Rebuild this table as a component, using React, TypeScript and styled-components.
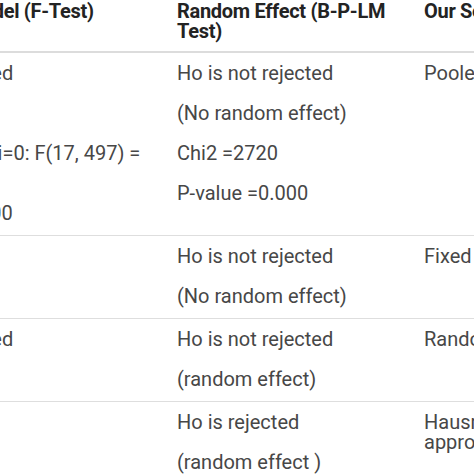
import React from "react";
import styled, { createGlobalStyle } from "styled-components";

const Global = createGlobalStyle`
  html, body {
    margin: 0;
    padding: 0;
    background: #ffffff;
    overflow: hidden;
  }
  body {
    width: 474px;
    height: 474px;
    font-family: Roboto, "Liberation Sans", Arial, sans-serif;
  }
`;

const Table = styled.table`
  border-collapse: collapse;
  table-layout: fixed;
  margin-top: -10px;
  margin-left: -153px;
  width: 727px;
`;

const Col = styled.col<{ $w: number }>`
  width: ${(p) => p.$w}px;
`;

const HeadCell = styled.th`
  text-align: left;
  vertical-align: top;
  padding: 11px 10px 10px 10px;
  font-size: 20px;
  line-height: 20px;
  font-weight: 700;
  letter-spacing: -0.3px;
  color: #232323;
  border-bottom: 2px solid #dcdcdc;
`;

const Row = styled.tr<{ $last?: boolean }>`
  border-bottom: ${(p) => (p.$last ? "none" : "1px solid #dedede")};
`;

const Cell = styled.td`
  vertical-align: top;
  padding: 10px 10px 12px 10px;
  font-size: 20px;
  line-height: 20px;
  color: #474747;
`;

const Line = styled.p`
  margin: 0 0 20px 0;
  &:last-child {
    margin-bottom: 0;
  }
`;

type RowData = [string[], string[], string[]];

const rows: RowData[] = [
  [
    ["Ho is not rejected", "(pooled model)", "F test that all u_i=0: F(17, 497) = 1.14", "Prob > F = 0.0000"],
    ["Ho is not rejected", "(No random effect)", "Chi2 =2720", "P-value =0.000"],
    ["Pooled Model"],
  ],
  [
    ["Ho is rejected", "(fixed effect)"],
    ["Ho is not rejected", "(No random effect)"],
    ["Fixed Effect"],
  ],
  [
    ["Ho is not rejected", "(pooled)"],
    ["Ho is not rejected", "(random effect)"],
    ["Random Effect"],
  ],
  [
    ["Ho is rejected", "(fixed effect)"],
    ["Ho is rejected", "(random effect )"],
    ["Hausman test approach"],
  ],
];

export default function App() {
  return (
    <>
      <Global />
      <Table>
        <colgroup>
          <Col $w={320} />
          <Col $w={247} />
          <Col $w={160} />
        </colgroup>
        <thead>
          <tr>
            <HeadCell>Fixed Effect Model (F-Test)</HeadCell>
            <HeadCell>Random Effect (B-P-LM Test)</HeadCell>
            <HeadCell>Our Selection</HeadCell>
          </tr>
        </thead>
        <tbody>
          {rows.map((r, i) => (
            <Row key={i} $last={i === rows.length - 1}>
              {r.map((cell, j) => (
                <Cell key={j}>
                  {cell.map((t, k) => (
                    <Line key={k}>{t}</Line>
                  ))}
                </Cell>
              ))}
            </Row>
          ))}
        </tbody>
      </Table>
    </>
  );
}
